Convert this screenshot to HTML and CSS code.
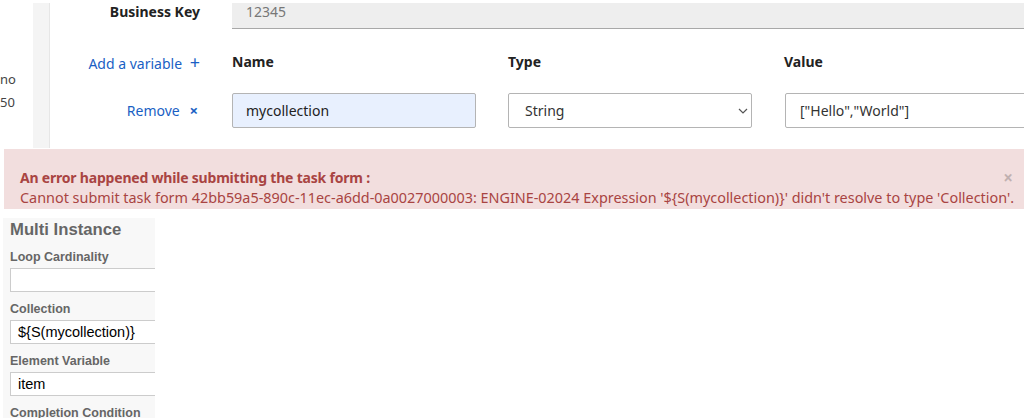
FILE: index.html
```html
<!DOCTYPE html>
<html lang="en">
<head>
    <meta charset="UTF-8">
    <title>Start Process</title>
    <link rel="stylesheet" href="styles.css">
</head>
<body>

    <div class="top">
        <div class="side">
            <div class="side-line first">no</div>
            <div class="side-line">50</div>
        </div>
        <div class="strip"></div>

        <div class="form">
            <label class="row-label">Business Key</label>
            <div class="field field-key">12345</div>

            <a class="link">Add a variable <span class="link-icon">+</span></a>
            <div class="col-head">Name</div>
            <div class="col-head">Type</div>
            <div class="col-head">Value</div>

            <a class="link link-remove">Remove <span class="link-icon small">&times;</span></a>
            <div class="field field-name">mycollection</div>
            <div class="field field-select">
                <span>String</span>
                <svg width="10" height="6" viewBox="0 0 10 6"><path d="M1 1 L5 5 L9 1" fill="none" stroke="#555" stroke-width="1.2"/></svg>
            </div>
            <div class="field field-value">["Hello","World"]</div>
        </div>
    </div>

    <div class="alert">
        <span class="close">&times;</span>
        <strong>An error happened while submitting the task form :</strong>
        <div class="alert-msg">Cannot submit task form 42bb59a5-890c-11ec-a6dd-0a0027000003: ENGINE-02024 Expression '${S(mycollection)}' didn't resolve to type 'Collection'.</div>
    </div>

    <div class="panel">
        <div class="panel-title">Multi Instance</div>

        <div class="panel-label">Loop Cardinality</div>
        <div class="panel-input"></div>

        <div class="panel-label">Collection</div>
        <div class="panel-input">${S(mycollection)}</div>

        <div class="panel-label">Element Variable</div>
        <div class="panel-input">item</div>

        <div class="panel-label">Completion Condition</div>
        <div class="panel-input"></div>
    </div>

</body>
</html>
```

FILE: styles.css
```css
body {
    margin: 0;
    background: #ffffff;
    font-family: 'Noto Sans', sans-serif;
    font-size: 14px;
    color: #222;
    overflow: hidden;
    height: 418px;
}

/* upper part: start form */
.top {
    display: flex;
    height: 145px;
    padding-top: 3px;
    overflow: hidden;
}

.side {
    width: 33px;
    overflow: hidden;
    font-size: 13px;
    color: #444;
}

.side-line {
    line-height: 16px;
}

.side-line.first {
    margin-top: 68px;
    margin-bottom: 7px;
}

.strip {
    width: 16px;
    background: #f4f4f4;
    border-right: 1px solid #e6e6e6;
}

.form {
    flex: 1;
    display: grid;
    grid-template-columns: 150px 244px 244px 1fr;
    grid-template-rows: 26px 20px 35px;
    column-gap: 32px;
    row-gap: 22px;
    min-width: 0;
}

.row-label {
    font-weight: bold;
    text-align: right;
    line-height: 18px;
}

.field {
    box-sizing: border-box;
    border: 1px solid #b4b4b4;
    border-radius: 2px;
    line-height: 33px;
    padding: 0 14px;
    color: #333;
    white-space: nowrap;
}

.field-key {
    grid-column: 2 / 5;
    margin-right: -20px;
    background: #eeeeee;
    border: none;
    border-bottom: 1px solid #a8a8a8;
    border-radius: 0;
    line-height: 18px;
    color: #777;
}

.field-name {
    background: #e8f0fe;
    color: #222;
    padding-left: 13px;
}

.field-select {
    display: flex;
    justify-content: space-between;
    align-items: center;
    padding-left: 16px;
    padding-right: 3px;
}

.field-value {
    margin-left: 1px;
    margin-right: -20px;
}

.col-head {
    font-weight: bold;
    line-height: 22px;
}

.link {
    color: #1a5fc4;
    text-align: right;
    line-height: 22px;
    cursor: pointer;
}

.link-remove {
    line-height: 35px;
    padding-right: 2px;
}

.link-icon {
    font-size: 18px;
    margin-left: 4px;
}

.link-icon.small {
    font-size: 15px;
    font-weight: bold;
    margin-left: 6px;
}

/* error message */
.alert {
    margin: 1px 0 0 4px;
    height: 60px;
    box-sizing: border-box;
    padding: 19px 16px 0 16px;
    background: #f2dede;
    color: #a94442;
    line-height: 20px;
    white-space: nowrap;
}

.alert strong {
    display: block;
    letter-spacing: -0.2px;
}

.alert-msg {
    font-size: 14.4px;
}

.close {
    float: right;
    color: #000;
    opacity: 0.2;
    font-size: 17px;
    font-weight: bold;
    margin-right: -5px;
}

/* properties panel */
.panel {
    margin: 9px 0 0 3px;
    width: 145px;
    padding: 2px 0 0 7px;
    background: #f8f8f8;
    font-family: 'Liberation Sans', Arial, sans-serif;
    overflow: hidden;
    height: 200px;
}

.panel-title {
    font-size: 16.7px;
    font-weight: bold;
    color: #666;
    line-height: 20px;
}

.panel-label {
    margin-top: 9px;
    font-size: 12.5px;
    font-weight: bold;
    color: #666;
    line-height: 16px;
}

.panel-input {
    margin-top: 3px;
    width: 200px;
    height: 24px;
    box-sizing: border-box;
    border: 1px solid #cccccc;
    background: #fff;
    padding-left: 7px;
    font-size: 14.5px;
    line-height: 22px;
    color: #000;
}
```
